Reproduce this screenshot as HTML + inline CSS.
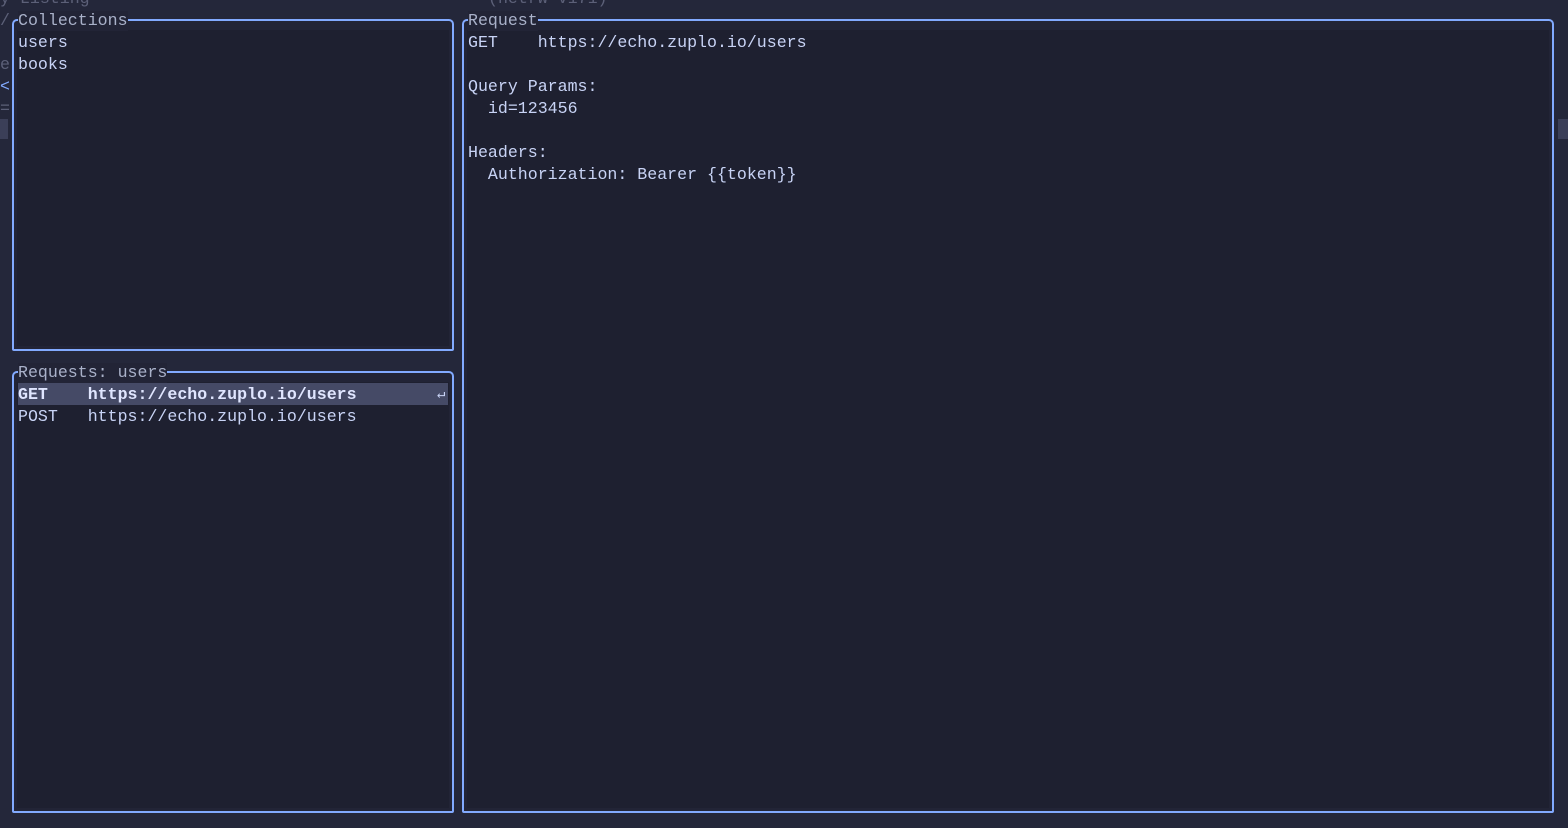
<!DOCTYPE html>
<html><head><meta charset="utf-8"><style>
html,body{margin:0;padding:0}
body{width:1568px;height:828px;background:#24273a;position:relative;overflow:hidden;font-family:"Liberation Mono",monospace;font-size:16.6px;color:#c8d3f5}
.t{position:absolute;white-space:pre;line-height:22px;height:22px}
.box{position:absolute;border:2px solid #82aaff;border-radius:5px 5px 2px 2px;background:#222436;box-sizing:border-box}
.in{position:absolute;left:3px;right:3px;top:9px;bottom:3px;background:#1e2030}
.title{color:#a9b1c9;background:#222436;height:20px;line-height:20px}
.g{color:#5c6078}
</style></head><body>
<div class="t g" style="left:0;top:-12px">y Listing</div>
<div class="t g" style="left:488px;top:-12px">(netrw v171)</div>
<div class="t g" style="left:0;top:10px">/</div>
<div class="t g" style="left:0;top:54px">e</div>
<div class="t" style="left:0;top:76px;color:#82aaff">&lt;</div>
<div class="t g" style="left:0;top:98px">=</div>
<div style="position:absolute;left:0;top:119px;width:8px;height:20px;background:#3b3f58"></div>
<div style="position:absolute;left:1558px;top:119px;width:10px;height:20px;background:#3b3f58"></div>

<div class="box" style="left:12px;top:19px;width:442px;height:332px"><div class="in"></div></div>
<div class="box" style="left:12px;top:371px;width:442px;height:442px"><div class="in"></div></div>
<div class="box" style="left:462px;top:19px;width:1092px;height:794px"><div class="in"></div></div>

<div class="t title" style="left:18px;top:11px">Collections</div>
<div class="t" style="left:18px;top:32px">users</div>
<div class="t" style="left:18px;top:54px">books</div>

<div class="t title" style="left:18px;top:363px">Requests: users</div>
<div style="position:absolute;left:18px;top:383px;width:430px;height:22px;background:#454a66"></div>
<div class="t" style="left:18px;top:384px;font-weight:bold;color:#e0e6ff">GET    https://echo.zuplo.io/users</div>
<div class="t" style="left:437px;top:384px;font-size:14px">↵</div>
<div class="t" style="left:18px;top:406px">POST   https://echo.zuplo.io/users</div>

<div class="t title" style="left:468px;top:11px">Request</div>
<div class="t" style="left:468px;top:32px">GET    https://echo.zuplo.io/users</div>
<div class="t" style="left:468px;top:76px">Query Params:</div>
<div class="t" style="left:468px;top:98px">  id=123456</div>
<div class="t" style="left:468px;top:142px">Headers:</div>
<div class="t" style="left:468px;top:164px">  Authorization: Bearer {{token}}</div>
</body></html>
